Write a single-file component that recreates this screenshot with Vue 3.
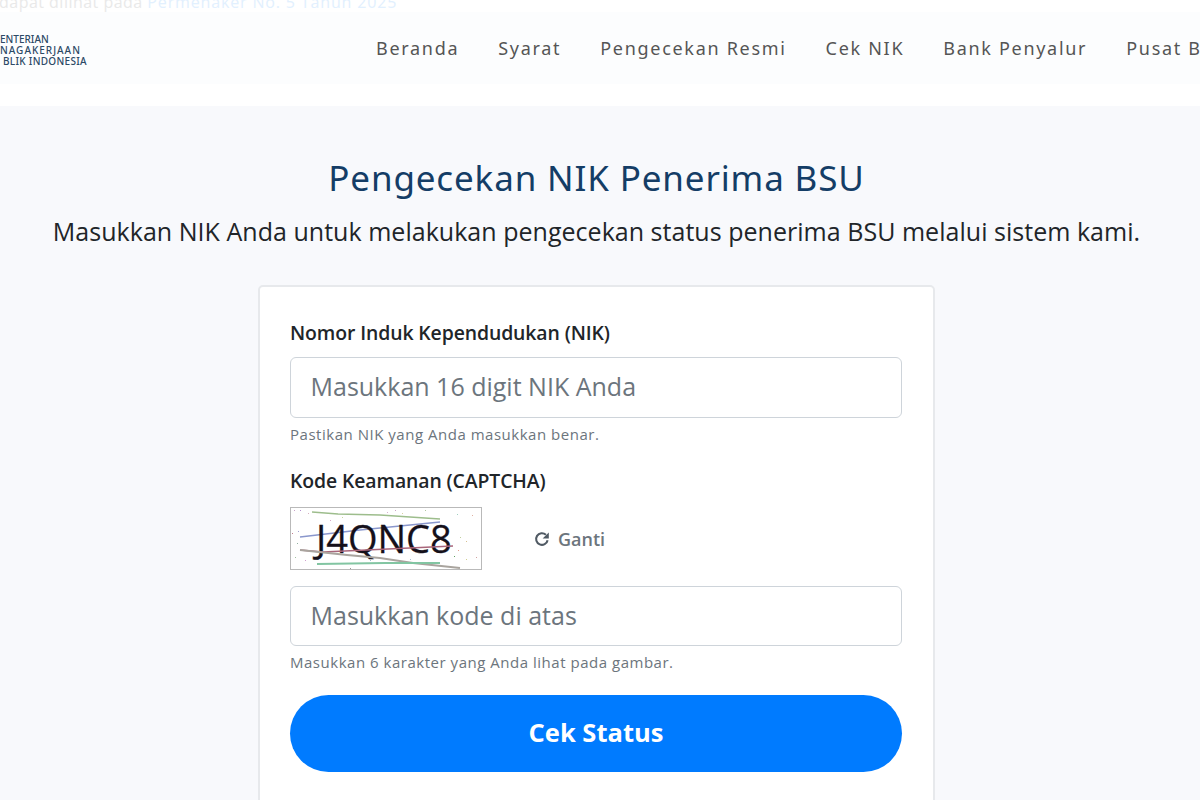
<script setup>
const navItems = ['Beranda', 'Syarat', 'Pengecekan Resmi', 'Cek NIK', 'Bank Penyalur', 'Pusat Bantuan']
const noise = [
  [4, 3, '#c9a3c9'], [10, 3, '#b58fd0'], [18, 6, '#d6b0c0'], [40, 13, '#d8a8c8'], [52, 10, '#c8d8a0'],
  [97, 5, '#d8b0d0'], [105, 3, '#c9a3c9'], [112, 6, '#d8d0a0'], [135, 3, '#b0c8a0'], [167, 7, '#a0d0c0'],
  [182, 8, '#e0b0a0'], [170, 30, '#c0d0a0'], [176, 34, '#d8c090'], [2, 26, '#c08090'], [7, 36, '#90b0a0'],
  [8, 24, '#a0a0d0'], [15, 53, '#d0a0d0'], [5, 50, '#a0c0a0'], [164, 49, '#60a060'], [176, 52, '#d0d090'],
  [186, 50, '#d0a0a0'], [60, 61, '#999'], [168, 43, '#e0a090'], [120, 52, '#b0c0d0'], [80, 53, '#a0c0d0']
]
</script>

<template>
  <div class="page">
    <div class="notice">
      <span>dapat dilihat pada </span><a class="notice-link">Permenaker No. 5 Tahun 2025</a>
    </div>
    <header class="navbar">
      <div class="logo">
        <span class="l1">ENTERIAN</span>
        <span class="l2">NAGAKERJAAN</span>
        <span class="l3">BLIK INDONESIA</span>
      </div>
      <nav class="nav">
        <a v-for="item in navItems" :key="item" class="nav-item">{{ item }}</a>
      </nav>
    </header>
    <main class="main">
      <h1 class="title">Pengecekan NIK Penerima BSU</h1>
      <p class="lead">Masukkan NIK Anda untuk melakukan pengecekan status penerima BSU melalui sistem kami.</p>
      <section class="card">
        <label class="label">Nomor Induk Kependudukan (NIK)</label>
        <input class="field field-nik" placeholder="Masukkan 16 digit NIK Anda" />
        <small class="hint">Pastikan NIK yang Anda masukkan benar.</small>
        <label class="label label-captcha">Kode Keamanan (CAPTCHA)</label>
        <div class="captcha-row">
          <svg class="captcha" width="192" height="63" viewBox="0 0 192 63">
            <rect x="0.5" y="0.5" width="191" height="62" fill="#fff" stroke="#b9b9b9" />
            <path d="M22 5 L48 7 L90 8 L150 12" fill="none" stroke="#9dbd8c" stroke-width="1.6" />
            <path d="M10 30 L70 23 L150 15" fill="none" stroke="#8a97cc" stroke-width="1.3" />
            <text x="26" y="46" class="captcha-text">J4QNC8</text>
            <path d="M10 43 L33 45 L163 39" fill="none" stroke="#a8657a" stroke-width="1.3" />
            <path d="M10 43 L57 48 L90 51 L123 56 L170 61" fill="none" stroke="#a9a49e" stroke-width="1.8" />
            <path d="M27 57 L95 56 L150 56" fill="none" stroke="#82c5a2" stroke-width="1.8" />
            <rect v-for="(n, i) in noise" :key="i" :x="n[0]" :y="n[1]" width="1" height="1" :fill="n[2]" />
          </svg>
          <button class="refresh" type="button">
            <svg width="16" height="16" viewBox="0 0 16 16" fill="none">
              <path d="M13.6 9.2A5.8 5.8 0 1 1 11.9 3.8" stroke="#505a64" stroke-width="2.1" />
              <path d="M14.8 1.4V7.6H8.6Z" fill="#505a64" />
            </svg>
            <span>Ganti</span>
          </button>
        </div>
        <input class="field field-code" placeholder="Masukkan kode di atas" />
        <small class="hint">Masukkan 6 karakter yang Anda lihat pada gambar.</small>
        <button class="submit" type="button">Cek Status</button>
      </section>
    </main>
  </div>
</template>

<style>
html, body { margin: 0; overflow: hidden; background: #fff; }
</style>

<style scoped>
.page {
  width: 1200px;
  height: 800px;
  overflow: hidden;
  font-family: "Open Sans", "Noto Sans", sans-serif;
  background: #fff;
}
.notice {
  height: 12px;
  line-height: 5px;
  font-size: 16px;
  letter-spacing: 0.48px;
  color: #e9e9e9;
  white-space: nowrap;
  margin-left: -1px;
  overflow: hidden;
}
.notice a { color: #e2f0fe; letter-spacing: 0.85px; }
.navbar {
  height: 72px;
  background: #fcfdfe;
  display: flex;
  align-items: center;
  white-space: nowrap;
}
.logo {
  display: flex;
  flex-direction: column;
  flex: none;
  width: 100px;
  margin-top: 4px;
  font-family: "Noto Sans", sans-serif;
  font-weight: 500;
  font-size: 10px;
  line-height: 11px;
  color: #2c4a66;
}
.l2 { letter-spacing: 1px; }
.l3 { margin-left: 3px; letter-spacing: 0.3px; }
.nav {
  display: flex;
  gap: 39px;
  margin-left: 276px;
  flex: none;
  width: 824px;
  overflow: hidden;
}
.nav-item {
  flex: none;
  font-family: "Noto Sans", sans-serif;
  font-size: 18px;
  letter-spacing: 1.7px;
  color: #555;
}
.main {
  margin-top: 22px;
  box-sizing: border-box;
  padding-right: 7px;
  background: #f8f9fc;
  height: 694px;
  display: flex;
  flex-direction: column;
  align-items: center;
}
.title {
  margin: 49px 0 0;
  font-family: "Noto Sans", sans-serif;
  font-size: 35px;
  line-height: 46px;
  font-weight: 400;
  letter-spacing: 0.85px;
  color: #143d66;
}
.lead {
  margin: 12px 0 0;
  font-size: 25px;
  line-height: 36px;
  letter-spacing: 0.03px;
  color: #212529;
  white-space: nowrap;
}
.card {
  margin-top: 36px;
  width: 677px;
  height: 560px;
  flex: none;
  box-sizing: border-box;
  background: #fff;
  border: 2px solid #e7e9ec;
  border-radius: 5px;
  padding: 33px 30px;
  display: flex;
  flex-direction: column;
  align-items: stretch;
}
.label {
  font-size: 19.4px;
  line-height: 26px;
  font-weight: 600;
  color: #212529;
  letter-spacing: -0.1px;
}
.label-captcha { margin-top: 24px; }
.field {
  box-sizing: border-box;
  margin-top: 11px;
  width: 612px;
  height: 61px;
  border: 1.5px solid #ced4da;
  border-radius: 6px;
  padding: 0 19.5px 3px;
  font: 400 25px "Open Sans", sans-serif;
  background: #fff;
  outline: none;
}
.field::placeholder { color: #6c757d; opacity: 1; }
.field-code { margin-top: 16px; height: 60px; }
.hint {
  margin-top: 6px;
  font-size: 15px;
  line-height: 20px;
  letter-spacing: 0.52px;
  color: #6c757d;
}
.captcha-row {
  display: flex;
  align-items: center;
  margin-top: 13px;
  height: 63px;
}
.captcha { flex: none; display: block; }
.captcha-text {
  font-family: "Open Sans", sans-serif;
  font-size: 38px;
  fill: #15101a;
  stroke: #15101a;
  stroke-width: 0.3px;
}
.refresh {
  margin-left: 52px;
  border: 0;
  background: none;
  padding: 0;
  display: flex;
  align-items: center;
  gap: 8px;
  font: 600 18px "Open Sans", sans-serif;
  color: #6c757d;
}
.submit {
  margin-top: 23px;
  width: 612px;
  height: 77px;
  flex: none;
  border: 0;
  border-radius: 39px;
  padding: 0 0 3px;
  background: #007bff;
  color: #fff;
  font: 700 25.5px "Open Sans", sans-serif;
}
</style>
